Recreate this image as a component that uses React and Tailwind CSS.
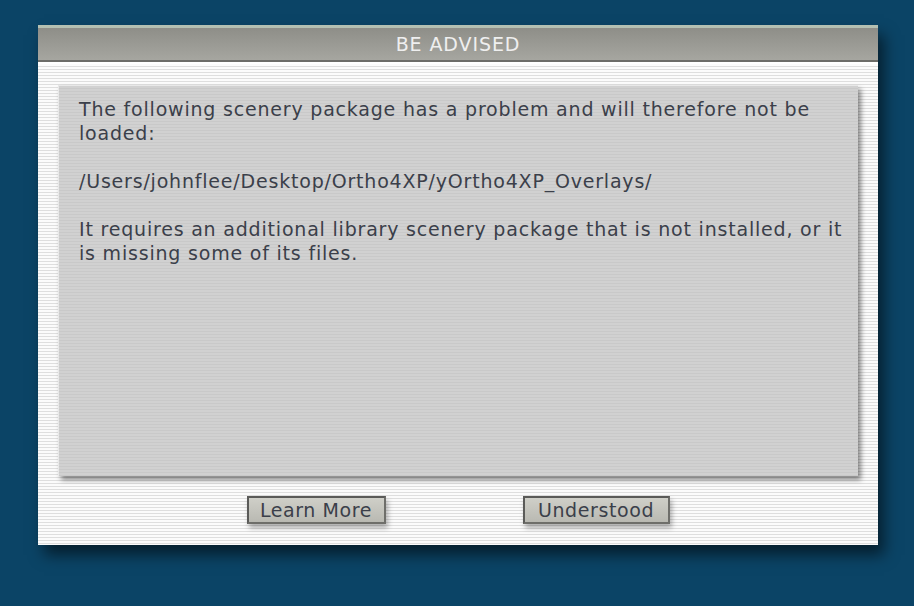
const font = { fontFamily: '"DejaVu Sans", Verdana, sans-serif' };

const DialogButton = ({ children, width }) => (
    <button
        className={`h-[28px] ${width} border-2 border-t-[#5a5a58] border-l-[#5a5a58] border-r-[#6e6e6a] border-b-[#6e6e6a] bg-[linear-gradient(#cfcfc8,#b9b9b2)] text-[19px] tracking-[0.6px] leading-none text-[#3b3f4a] shadow-[2px_4px_5px_rgba(0,0,0,0.3)]`}
        style={font}
    >
        {children}
    </button>
);

const App = () => {
    return (
        <div className="w-[914px] h-[606px] bg-[#0b4466] pt-[25px] pl-[38px]" style={font}>
            <div className="w-[840px] h-[520px] flex flex-col bg-[repeating-linear-gradient(#fbfbfb_0px,#fbfbfb_2px,#dedede_2px,#dedede_3px)] shadow-[6px_10px_14px_rgba(0,0,0,0.55)]">
                {/* title bar */}
                <div className="h-[37px] shrink-0 flex items-center justify-center border-t-[3px] border-t-[#b4c0b2] border-b-[2px] border-b-[#6c6c68] bg-[linear-gradient(#8e8e88,#a6a6a0)]">
                    <span className="text-[19px] text-[#efefef] tracking-[0.9px] leading-none">BE ADVISED</span>
                </div>
                <div className="h-[2px] bg-white shrink-0" />

                <div className="flex-1 flex flex-col px-[20px] pt-[21px]">
                    {/* message panel */}
                    <div className="h-[391px] border-t border-l border-t-[#e8e8e8] border-l-[#e8e8e8] bg-[repeating-linear-gradient(#d1d1d1_0px,#d1d1d1_2px,#c9c9c9_2px,#c9c9c9_3px)] shadow-[3px_4px_5px_rgba(0,0,0,0.45)] pl-[20px] pr-[8px] pt-[11px] text-[19px] tracking-[0.8px] leading-[24px] text-[#3b3f4a]">
                        <p>The following scenery package has a problem and will therefore not be loaded:</p>
                        <p className="mt-[24px]">/Users/johnflee/Desktop/Ortho4XP/yOrtho4XP_Overlays/</p>
                        <p className="mt-[24px]">It requires an additional library scenery package that is not installed, or it is missing some of its files.</p>
                    </div>

                    <div className="flex justify-center gap-[137px] mt-[20px]">
                        <DialogButton width="w-[139px]">Learn More</DialogButton>
                        <DialogButton width="w-[147px]">Understood</DialogButton>
                    </div>
                </div>
            </div>
        </div>
    );
};

export default App;
